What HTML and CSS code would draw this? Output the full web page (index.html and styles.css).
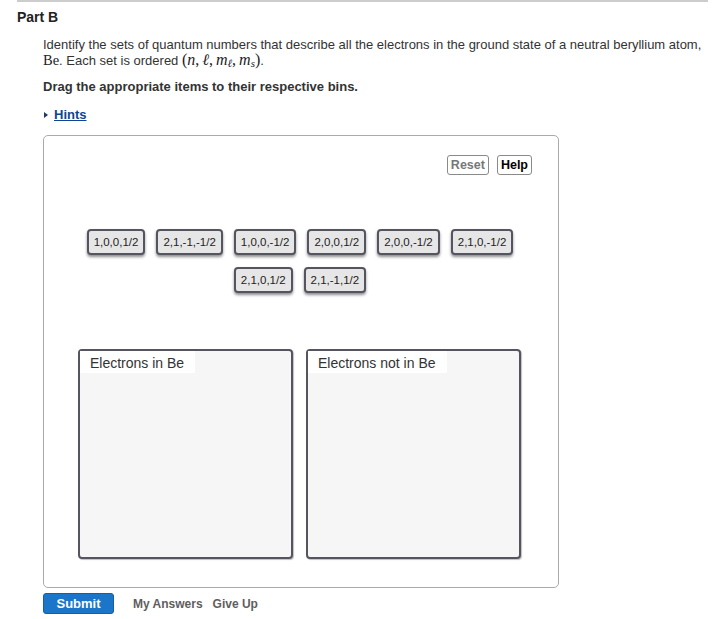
FILE: index.html
```html
<!DOCTYPE html>
<html>
<head>
<meta charset="utf-8">
<link rel="stylesheet" href="styles.css">
</head>
<body>
<div class="page">
  <div class="topline"></div>
  <h2 class="part">Part B</h2>
  <div class="content">
    <p class="question">Identify the sets of quantum numbers that describe all the electrons in the ground state of a neutral beryllium atom,<br><span class="math up">Be</span>. Each set is ordered <span class="math">(<i>n</i>,<span class="sp"></span><i>ℓ</i>,<span class="sp"></span><i>m</i><sub><i>ℓ</i></sub>,<span class="sp"></span><i>m</i><sub><i>s</i></sub>)</span>.</p>
    <p class="instruction">Drag the appropriate items to their respective bins.</p>
    <div class="hints"><span class="tri"></span><a class="hints-link" href="#">Hints</a></div>

    <div class="dnd">
      <div class="toolbar">
        <button class="tbtn reset">Reset</button>
        <button class="tbtn help">Help</button>
      </div>
      <div class="chips">
        <div class="chip">1,0,0,1/2</div>
        <div class="chip">2,1,-1,-1/2</div>
        <div class="chip">1,0,0,-1/2</div>
        <div class="chip">2,0,0,1/2</div>
        <div class="chip">2,0,0,-1/2</div>
        <div class="chip">2,1,0,-1/2</div>
        <div class="chip">2,1,0,1/2</div>
        <div class="chip">2,1,-1,1/2</div>
      </div>
      <div class="bins">
        <div class="bin"><span class="bin-label">Electrons in Be</span></div>
        <div class="bin"><span class="bin-label">Electrons not in Be</span></div>
      </div>
    </div>

    <div class="actions">
      <button class="submit">Submit</button>
      <a class="action-link" href="#">My Answers</a>
      <a class="action-link" href="#">Give Up</a>
    </div>
  </div>
</div>
</body>
</html>
```
FILE: styles.css
```css
html, body {
  margin: 0;
  padding: 0;
  background: #ffffff;
}
body {
  font-family: "Liberation Sans", Arial, Helvetica, sans-serif;
  color: #333333;
  font-size: 13px;
}
.page {
  width: 719px;
}
.topline {
  margin-left: 17px;
  width: 691px;
  height: 2px;
  background: #cccccc;
}
.part {
  margin: 7px 0 0 17px;
  font-size: 14px;
  line-height: 16px;
  font-weight: bold;
  color: #222222;
}
.content {
  margin-left: 43px;
}
.question {
  margin: 12px 0 0 0;
  line-height: 16px;
  font-size: 13px;
  color: #333333;
}
.math {
  font-family: "Liberation Serif", "Times New Roman", serif;
  font-size: 16px;
  line-height: 0;
  color: #222222;
}
.math.up {
  font-size: 14.5px;
}
.math i {
  font-style: italic;
}
.math .sp {
  display: inline-block;
  width: 3px;
  height: 0;
}
.math sub {
  font-size: 11px;
  line-height: 0;
  vertical-align: -2px;
}
.instruction {
  margin: 10px 0 0 0;
  font-weight: bold;
  line-height: 16px;
  color: #333333;
}
.hints {
  margin-top: 12px;
  display: flex;
  align-items: center;
  line-height: 16px;
}
.tri {
  width: 0;
  height: 0;
  border-top: 3.5px solid transparent;
  border-bottom: 3.5px solid transparent;
  border-left: 4px solid #1c3a6e;
  margin-left: 1px;
  margin-right: 6px;
}
.hints-link {
  font-weight: bold;
  color: #0e4591;
  text-decoration: underline;
}
.dnd {
  margin-top: 12px;
  width: 514px;
  border: 1px solid #aaaaaa;
  border-radius: 5px;
  padding: 19px 0 28px 0;
}
.toolbar {
  display: flex;
  justify-content: flex-end;
  gap: 8px;
  padding-right: 26px;
}
.tbtn {
  height: 20px;
  box-sizing: border-box;
  border: 1px solid #8a8a8a;
  border-radius: 3px;
  background: #ffffff;
  font-family: "Liberation Sans", Arial, sans-serif;
  font-weight: bold;
  font-size: 12.5px;
  line-height: 18px;
  padding: 0 3px;
  margin: 0;
}
.reset {
  color: #777777;
}
.help {
  color: #000000;
}
.chips {
  margin: 54px auto 0 auto;
  width: 440px;
  display: flex;
  flex-wrap: wrap;
  justify-content: center;
  column-gap: 11px;
  row-gap: 12px;
  position: relative;
  left: -1px;
}
.chip {
  height: 26px;
  box-sizing: border-box;
  border: 2px solid #55555f;
  border-radius: 4px;
  background: #e6e6e6;
  box-shadow: 0 2px 3px rgba(0, 0, 0, 0.45);
  font-size: 11.5px;
  line-height: 22px;
  padding: 0 5px;
  color: #222222;
  white-space: nowrap;
}
.bins {
  margin-top: 56px;
  padding-left: 34px;
  display: flex;
  gap: 13px;
}
.bin {
  width: 215px;
  height: 210px;
  box-sizing: border-box;
  border: 2px solid #55555f;
  border-radius: 4px;
  background: #f6f6f6;
  box-shadow: 1px 1px 1px rgba(0, 0, 0, 0.25);
  display: flex;
  align-items: flex-start;
}
.bin-label {
  background: #ffffff;
  padding: 3px 11px 0 10px;
  line-height: 19px;
  font-size: 14px;
  color: #333333;
}
.actions {
  margin-top: 5px;
  display: flex;
  align-items: center;
}
.submit {
  width: 71px;
  height: 21px;
  box-sizing: border-box;
  border: 1px solid #15609f;
  border-radius: 3px;
  background: #1b75c8;
  color: #ffffff;
  font-family: "Liberation Sans", Arial, sans-serif;
  font-weight: bold;
  font-size: 13px;
  line-height: 19px;
  padding: 0;
  margin: 0 19px 0 0;
}
.action-link {
  font-weight: bold;
  font-size: 12px;
  color: #5e5e5e;
  text-decoration: none;
  margin-right: 10px;
}
```
